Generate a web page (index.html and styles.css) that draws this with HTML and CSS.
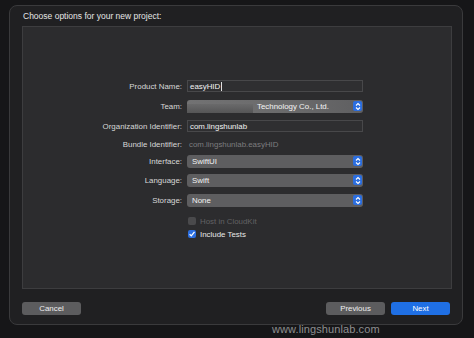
FILE: index.html
```html
<!DOCTYPE html>
<html lang="en">
<head>
    <meta charset="UTF-8">
    <meta name="viewport" content="width=device-width, initial-scale=1.0">
    <title>New Project Options</title>
    <link rel="stylesheet" href="styles.css">
</head>
<body>

    <!-- Sheet window -->
    <div class="sheet">
        <div class="sheet-title">Choose options for your new project:</div>

        <div class="panel">
            <div class="form">
                <label>Product Name:</label>
                <div class="field text-field"><span>easyHID</span><span class="caret"></span></div>

                <label>Team:</label>
                <div class="field popup team">
                    <span class="smudge"></span>
                    <span class="team-name">Technology Co., Ltd.</span>
                    <span class="stepper"><svg width="6" height="9" viewBox="0 0 6 9"><path d="M1 3.5 L3 1.5 L5 3.5 M1 5.5 L3 7.5 L5 5.5" fill="none" stroke="#fff" stroke-width="1.1"/></svg></span>
                </div>

                <label>Organization Identifier:</label>
                <div class="field text-field"><span>com.lingshunlab</span></div>

                <label>Bundle Identifier:</label>
                <div class="field plain">com.lingshunlab.easyHID</div>

                <label>Interface:</label>
                <div class="field popup"><span>SwiftUI</span>
                    <span class="stepper"><svg width="6" height="9" viewBox="0 0 6 9"><path d="M1 3.5 L3 1.5 L5 3.5 M1 5.5 L3 7.5 L5 5.5" fill="none" stroke="#fff" stroke-width="1.1"/></svg></span>
                </div>

                <label>Language:</label>
                <div class="field popup"><span>Swift</span>
                    <span class="stepper"><svg width="6" height="9" viewBox="0 0 6 9"><path d="M1 3.5 L3 1.5 L5 3.5 M1 5.5 L3 7.5 L5 5.5" fill="none" stroke="#fff" stroke-width="1.1"/></svg></span>
                </div>

                <label>Storage:</label>
                <div class="field popup"><span>None</span>
                    <span class="stepper"><svg width="6" height="9" viewBox="0 0 6 9"><path d="M1 3.5 L3 1.5 L5 3.5 M1 5.5 L3 7.5 L5 5.5" fill="none" stroke="#fff" stroke-width="1.1"/></svg></span>
                </div>

                <div class="checks">
                    <div class="check disabled"><span class="box"></span>Host in CloudKit</div>
                    <div class="check"><span class="box on"><svg width="8" height="8" viewBox="0 0 8 8"><path d="M1.6 4.2 L3.3 5.9 L6.5 1.9" fill="none" stroke="#fff" stroke-width="1.3"/></svg></span>Include Tests</div>
                </div>
            </div>
        </div>

        <div class="footer">
            <button class="btn">Cancel</button>
            <div class="spacer"></div>
            <button class="btn">Previous</button>
            <button class="btn primary">Next</button>
        </div>
    </div>

    <div class="watermark">www.lingshunlab.com</div>

</body>
</html>
```

FILE: styles.css
```css
body {
    margin: 0;
    background-color: #161618;
    font-family: 'Liberation Sans', Arial, sans-serif;
    color: #dedede;
    width: 474px;
    height: 338px;
    overflow: hidden;
    position: relative;
}

/* Sheet */
.sheet {
    margin: 5px 0 0 9px;
    width: 454px;
    height: 320px;
    background-color: #202022;
    border: 1px solid #3a3a3c;
    border-radius: 8px;
    padding: 0 10px 0 12px;
    box-sizing: border-box;
    display: flex;
    flex-direction: column;
}

.sheet-title {
    height: 20px;
    line-height: 20px;
    font-size: 8.5px;
    color: #e6e6e6;
    padding-left: 1px;
}

.panel {
    height: 263px;
    box-sizing: border-box;
    background-color: #2c2c2e;
    border: 1px solid #3d3d3f;
    display: flex;
    align-items: center;
}

/* Form grid */
.form {
    display: grid;
    grid-template-columns: 159px 176px;
    grid-template-rows: 20px 20px 20px 16px 18px 20px 20px auto;
    column-gap: 5px;
    align-items: center;
    font-size: 7.9px;
}

.form label {
    text-align: right;
    color: #d8d8d8;
}

.field {
    height: 12px;
    box-sizing: border-box;
    display: flex;
    align-items: center;
    color: #f2f2f2;
    position: relative;
}

.text-field {
    background-color: #2f2f31;
    border: 1px solid #48484a;
    padding-left: 2px;
}

.caret {
    width: 1px;
    height: 9px;
    background-color: #e0e0e0;
    margin-left: 1px;
}

.plain {
    color: #7c7c7e;
    padding-left: 2px;
}

.popup {
    height: 13px;
    background-color: #5e5e60;
    border-radius: 3px;
    padding-left: 5px;
}

.stepper {
    position: absolute;
    right: 1px;
    top: 1.5px;
    width: 9px;
    height: 10px;
    border-radius: 2px;
    background-color: #2b6ee0;
    display: flex;
    align-items: center;
    justify-content: center;
}

.team {
    background: linear-gradient(to right, #727273 0, #6a6a6b 60%, #5f5f61 100%);
    padding-left: 70px;
}

.smudge {
    position: absolute;
    left: 0;
    top: 4px;
    width: 66px;
    height: 9px;
    background: linear-gradient(to bottom, #6a6a6b, #555556);
}

.team-name {
    position: relative;
    color: #f4f4f4;
}

/* Checkboxes */
.checks {
    grid-column: 2;
    display: flex;
    flex-direction: column;
    gap: 3px;
    padding-top: 6px;
}

.check {
    display: flex;
    align-items: center;
    height: 10px;
    color: #e8e8e8;
    padding-left: 1px;
}

.check.disabled {
    color: #626264;
}

.box {
    width: 8px;
    height: 8px;
    border-radius: 2px;
    background-color: #4a4a4c;
    margin-right: 4px;
    display: flex;
    align-items: center;
    justify-content: center;
}

.box.on {
    background-color: #2b6ee0;
}

/* Footer buttons */
.footer {
    display: flex;
    align-items: center;
    gap: 6px;
    padding-top: 13px;
}

.spacer {
    flex: 1;
}

.btn {
    width: 59px;
    height: 13px;
    border: none;
    border-radius: 3px;
    background-color: #5c5c5e;
    color: #eeeeee;
    font-family: 'Liberation Sans', Arial, sans-serif;
    font-size: 7.9px;
    padding: 0;
}

.btn.primary {
    background-color: #1f6fe4;
    color: #ffffff;
    margin-right: 2px;
}

.watermark {
    position: absolute;
    left: 272px;
    top: 323px;
    font-size: 11px;
    color: #8e8e90;
    letter-spacing: 0.1px;
}
```
